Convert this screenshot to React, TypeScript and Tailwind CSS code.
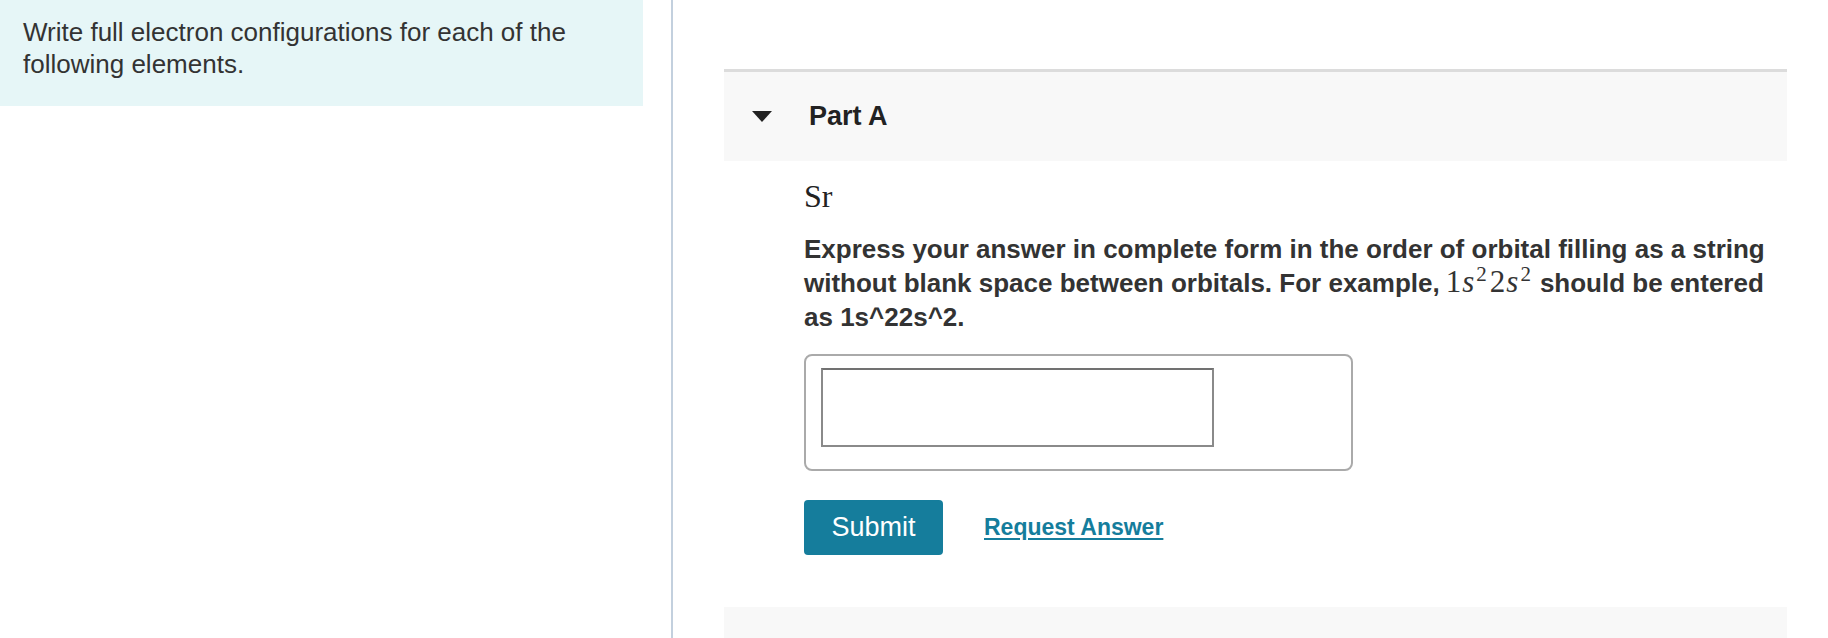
import React from 'react'

const sans = { fontFamily: '"Liberation Sans", Arial, Helvetica, sans-serif' }

function MathExample() {
  // 1s^2 2s^2 typeset like inline TeX
  return (
    <span className="ml-[6px] mr-[9px] inline-block font-['Liberation_Serif',serif] text-[31px] font-normal leading-none">
      1<i className="ml-[1px]">s</i>
      <span className="relative top-[-11px] ml-[2px] text-[21px]">2</span>
      <span className="ml-[3px]">2</span>
      <i className="ml-[1px]">s</i>
      <span className="relative top-[-11px] ml-[2px] text-[21px]">2</span>
    </span>
  )
}

export default function App() {
  return (
    <div
      className="flex h-[638px] w-[1828px] overflow-hidden bg-white text-[#333]"
      style={sans}
    >
      {/* Left: problem intro */}
      <div className="w-[673px] shrink-0 border-r-2 border-[#c3d0de]">
        <div className="w-[643px] bg-[#e6f6f7] pl-[23px] pr-[23px] pt-[16px] pb-[26px] text-[26px] leading-[32px] text-[#333]">
          Write full electron configurations for each of the following elements.
        </div>
      </div>

      {/* Right: part A */}
      <div className="flex-1 pl-[51px] pr-[41px] pt-[69px]">
        <div className="flex h-[92px] items-center border-t-[3px] border-[#dcdcdc] bg-[#f8f8f8]">
          <svg
            width="20"
            height="11"
            viewBox="0 0 20 11"
            className="ml-[28px]"
            aria-hidden
          >
            <polygon points="0,0 20,0 10,11" fill="#222" />
          </svg>
          <h2 className="ml-[37px] text-[27px] font-bold text-[#222]">Part A</h2>
        </div>

        <div className="pl-[80px]">
          <div className="mt-[17px] font-['Liberation_Serif',serif] text-[32px] leading-[36px] text-[#222]">
            Sr
          </div>

          <p className="mt-[18px] text-[26px] font-bold leading-[34px] text-[#333]">
            Express your answer in complete form in the order of orbital filling as a string without blank space between orbitals. For example,
            <MathExample />
            should be entered as 1s^22s^2.
          </p>

          <div className="mt-[20px] h-[117px] w-[549px] rounded-[8px] border-2 border-[#aaaaaa] pl-[15px] pt-[12px]">
            <input
              type="text"
              className="h-[79px] w-[393px] border-2 border-[#8a8a8a] border-t-[#717171] bg-white outline-none"
            />
          </div>

          <div className="mt-[29px] flex items-center">
            <button className="h-[55px] w-[139px] rounded-[4px] bg-[#157d9c] text-[27px] text-white">
              Submit
            </button>
            <a
              href="#"
              className="ml-[41px] text-[23px] font-bold text-[#157d9c] underline underline-offset-[3px]"
            >
              Request Answer
            </a>
          </div>
        </div>

        <div className="mt-[52px] h-[40px] bg-[#f8f8f8]" />
      </div>
    </div>
  )
}
